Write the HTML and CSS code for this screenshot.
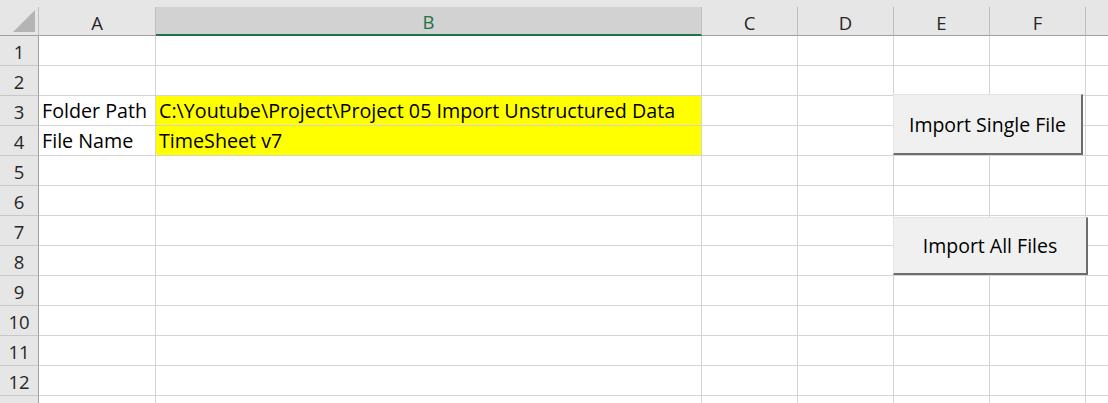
FILE: index.html
```html
<!DOCTYPE html>
<html>
<head>
<meta charset="utf-8">
<link rel="stylesheet" href="styles.css">
</head>
<body>
<div class="sheet">
  <div class="topstrip"></div>
  <div class="grid">
    <div class="hd corner"><span class="tri"></span></div>
    <div class="hd col">A</div>
    <div class="hd col sel">B</div>
    <div class="hd col">C</div>
    <div class="hd col">D</div>
    <div class="hd col">E</div>
    <div class="hd col">F</div>
    <div class="hd col last"></div>

    <div class="rh">1</div><div class="c"></div><div class="c"></div><div class="c"></div><div class="c"></div><div class="c"></div><div class="c"></div><div class="c last"></div>
    <div class="rh">2</div><div class="c"></div><div class="c"></div><div class="c"></div><div class="c"></div><div class="c"></div><div class="c"></div><div class="c last"></div>
    <div class="rh">3</div><div class="c">Folder Path</div><div class="c yel">C:\Youtube\Project\Project 05 Import Unstructured Data</div><div class="c"></div><div class="c"></div><div class="c"></div><div class="c"></div><div class="c last"></div>
    <div class="rh">4</div><div class="c">File Name</div><div class="c yel">TimeSheet v7</div><div class="c"></div><div class="c"></div><div class="c"></div><div class="c"></div><div class="c last"></div>
    <div class="rh">5</div><div class="c"></div><div class="c"></div><div class="c"></div><div class="c"></div><div class="c"></div><div class="c"></div><div class="c last"></div>
    <div class="rh">6</div><div class="c"></div><div class="c"></div><div class="c"></div><div class="c"></div><div class="c"></div><div class="c"></div><div class="c last"></div>
    <div class="rh">7</div><div class="c"></div><div class="c"></div><div class="c"></div><div class="c"></div><div class="c"></div><div class="c"></div><div class="c last"></div>
    <div class="rh">8</div><div class="c"></div><div class="c"></div><div class="c"></div><div class="c"></div><div class="c"></div><div class="c"></div><div class="c last"></div>
    <div class="rh">9</div><div class="c"></div><div class="c"></div><div class="c"></div><div class="c"></div><div class="c"></div><div class="c"></div><div class="c last"></div>
    <div class="rh">10</div><div class="c"></div><div class="c"></div><div class="c"></div><div class="c"></div><div class="c"></div><div class="c"></div><div class="c last"></div>
    <div class="rh">11</div><div class="c"></div><div class="c"></div><div class="c"></div><div class="c"></div><div class="c"></div><div class="c"></div><div class="c last"></div>
    <div class="rh">12</div><div class="c"></div><div class="c"></div><div class="c"></div><div class="c"></div><div class="c"></div><div class="c"></div><div class="c last"></div>
    <div class="rh"></div><div class="c"></div><div class="c"></div><div class="c"></div><div class="c"></div><div class="c"></div><div class="c"></div><div class="c last"></div>
  </div>
  <button class="btn btn-single">Import Single File</button>
  <button class="btn btn-all">Import All Files</button>
</div>
</body>
</html>
```

FILE: styles.css
```css
html, body {
  margin: 0;
  padding: 0;
  background: #ffffff;
  overflow: hidden;
}
.sheet {
  position: relative;
  width: 1108px;
  height: 403px;
  overflow: hidden;
  font-family: "Open Sans", "Liberation Sans", sans-serif;
  font-size: 19.7px;
  color: #000;
}
.topstrip {
  height: 7px;
  background: #e6e6e6;
}
.grid {
  display: grid;
  grid-template-columns: 39px 117px 546px 96px 96px 96px 96px 1fr;
  grid-template-rows: 29px repeat(13, 30px);
}
.hd {
  background: #e6e6e6;
  border-right: 1px solid #bfbfbf;
  border-bottom: 1px solid #9e9e9e;
  box-sizing: border-box;
  display: flex;
  align-items: center;
  justify-content: center;
  color: #262626;
  font-size: 18.5px;
  padding-top: 2px;
}
.hd.last { border-right: none; }
.hd.sel {
  background: #d2d2d2;
  color: #217346;
  border-bottom: 2px solid #217346;
}
.corner {
  justify-content: flex-end;
  align-items: flex-end;
  padding: 0 3px 3px 0;
}
.tri {
  width: 0;
  height: 0;
  border-left: 22px solid transparent;
  border-bottom: 22px solid #b4b4b4;
}
.rh {
  background: #e6e6e6;
  border-right: 1px solid #9e9e9e;
  border-bottom: 1px solid #c8c8c8;
  box-sizing: border-box;
  display: flex;
  align-items: flex-end;
  justify-content: center;
  padding-bottom: 1px;
  color: #262626;
  font-size: 18.5px;
  line-height: 1.3;
}
.c {
  border-right: 1px solid #d4d4d4;
  border-bottom: 1px solid #d4d4d4;
  box-sizing: border-box;
  display: flex;
  align-items: flex-end;
  padding: 0 3px 0 3px;
  white-space: nowrap;
  line-height: 1.35;
}
.c.last { border-right: none; }
.c.yel { background: #ffff00; }
.btn {
  position: absolute;
  background: #f0f0f0;
  border: none;
  border-top: 1px solid #e3e3e3;
  border-left: 1px solid #e3e3e3;
  border-right: 2px solid #6d6d6d;
  border-bottom: 2px solid #6d6d6d;
  font-family: "Open Sans", "Liberation Sans", sans-serif;
  font-size: 19.5px;
  color: #000;
  padding: 0;
  box-sizing: border-box;
}
.btn-single {
  left: 893px;
  top: 94px;
  width: 190px;
  height: 61px;
}
.btn-all {
  left: 893px;
  top: 217px;
  width: 195px;
  height: 58px;
}
```
